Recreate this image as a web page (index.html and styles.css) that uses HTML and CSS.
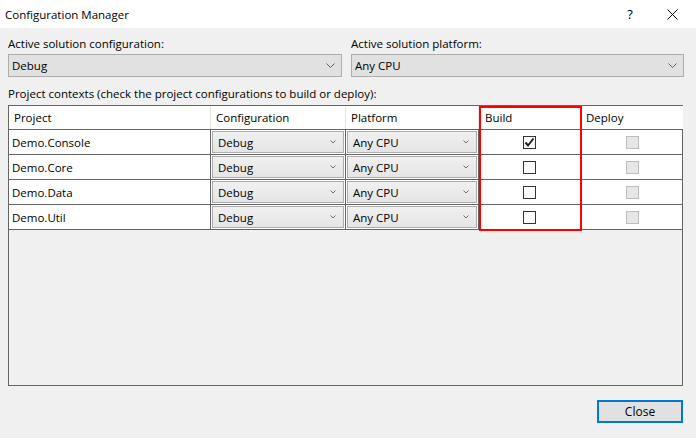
FILE: index.html
```html
<!DOCTYPE html>
<html>
<head>
<meta charset="utf-8">
<link rel="stylesheet" href="styles.css">
</head>
<body>
<div class="window">
  <div class="titlebar">
    <span class="title">Configuration Manager</span>
    <span class="tb-help">?</span>
    <span class="tb-close"><svg width="11" height="11" viewBox="0 0 11 11"><path d="M0.5 0.5 L10.5 10.5 M10.5 0.5 L0.5 10.5" stroke="#000" stroke-width="1" fill="none"/></svg></span>
  </div>
  <div class="content">
    <div class="selectors">
      <div class="field">
        <div class="label">Active solution configuration:</div>
        <div class="combo"><span>Debug</span><svg class="chev" width="9" height="5" viewBox="0 0 9 5"><path d="M0.5 0.5 L4.5 4.5 L8.5 0.5" stroke="#606060" fill="none"/></svg></div>
      </div>
      <div class="field">
        <div class="label">Active solution platform:</div>
        <div class="combo"><span>Any CPU</span><svg class="chev" width="9" height="5" viewBox="0 0 9 5"><path d="M0.5 0.5 L4.5 4.5 L8.5 0.5" stroke="#606060" fill="none"/></svg></div>
      </div>
    </div>
    <div class="label ctx">Project contexts (check the project configurations to build or deploy):</div>
    <div class="grid">
      <div class="row head">
        <div class="hc">Project</div>
        <div class="hc">Configuration</div>
        <div class="hc">Platform</div>
        <div class="hc">Build</div>
        <div class="hc last">Deploy</div>
      </div>
      <div class="row">
        <div class="c name">Demo.Console</div>
        <div class="c cb"><div class="gcombo"><span>Debug</span><svg class="gchev" width="6" height="4" viewBox="0 0 6 4"><path d="M0.5 0.5 L3 3 L5.5 0.5" stroke="#707070" fill="none"/></svg></div></div>
        <div class="c cb"><div class="gcombo"><span>Any CPU</span><svg class="gchev" width="6" height="4" viewBox="0 0 6 4"><path d="M0.5 0.5 L3 3 L5.5 0.5" stroke="#707070" fill="none"/></svg></div></div>
        <div class="c chk"><span class="box"><svg width="11" height="11" viewBox="0 0 11 11"><path d="M1.5 5.5 L4 8.5 L9.5 1.5" stroke="#222" stroke-width="2" fill="none"/></svg></span></div>
        <div class="c chk last"><span class="box dis"></span></div>
      </div>
      <div class="row">
        <div class="c name">Demo.Core</div>
        <div class="c cb"><div class="gcombo"><span>Debug</span><svg class="gchev" width="6" height="4" viewBox="0 0 6 4"><path d="M0.5 0.5 L3 3 L5.5 0.5" stroke="#707070" fill="none"/></svg></div></div>
        <div class="c cb"><div class="gcombo"><span>Any CPU</span><svg class="gchev" width="6" height="4" viewBox="0 0 6 4"><path d="M0.5 0.5 L3 3 L5.5 0.5" stroke="#707070" fill="none"/></svg></div></div>
        <div class="c chk"><span class="box"></span></div>
        <div class="c chk last"><span class="box dis"></span></div>
      </div>
      <div class="row">
        <div class="c name">Demo.Data</div>
        <div class="c cb"><div class="gcombo"><span>Debug</span><svg class="gchev" width="6" height="4" viewBox="0 0 6 4"><path d="M0.5 0.5 L3 3 L5.5 0.5" stroke="#707070" fill="none"/></svg></div></div>
        <div class="c cb"><div class="gcombo"><span>Any CPU</span><svg class="gchev" width="6" height="4" viewBox="0 0 6 4"><path d="M0.5 0.5 L3 3 L5.5 0.5" stroke="#707070" fill="none"/></svg></div></div>
        <div class="c chk"><span class="box"></span></div>
        <div class="c chk last"><span class="box dis"></span></div>
      </div>
      <div class="row">
        <div class="c name">Demo.Util</div>
        <div class="c cb"><div class="gcombo"><span>Debug</span><svg class="gchev" width="6" height="4" viewBox="0 0 6 4"><path d="M0.5 0.5 L3 3 L5.5 0.5" stroke="#707070" fill="none"/></svg></div></div>
        <div class="c cb"><div class="gcombo"><span>Any CPU</span><svg class="gchev" width="6" height="4" viewBox="0 0 6 4"><path d="M0.5 0.5 L3 3 L5.5 0.5" stroke="#707070" fill="none"/></svg></div></div>
        <div class="c chk"><span class="box"></span></div>
        <div class="c chk last"><span class="box dis"></span></div>
      </div>
      <div class="highlight"></div>
    </div>
    <div class="footer">
      <div class="btn">Close</div>
    </div>
  </div>
</div>
</body>
</html>
```

FILE: styles.css
```css
* { box-sizing: border-box; }
html, body { margin: 0; padding: 0; }
body {
  width: 696px;
  height: 438px;
  background: #f0f0f0;
  font-family: "Open Sans", "Noto Sans", sans-serif;
  font-size: 11.5px;
  color: #000;
  overflow: hidden;
}
.titlebar {
  height: 28px;
  background: #ffffff;
  display: flex;
  align-items: center;
}
.title {
  padding-left: 5px;
  font-size: 11.5px;
  flex: 1;
}
.tb-help {
  width: 16px;
  text-align: center;
  font-size: 13px;
  margin-right: 29px;
}
.tb-close {
  display: flex;
  margin-right: 18px;
}
.content {
  padding: 8px 13px 0 8px;
}
.selectors {
  display: grid;
  grid-template-columns: 334px 333px;
  column-gap: 9px;
}
.label {
  height: 16px;
  line-height: 16px;
  white-space: nowrap;
}
.combo {
  margin-top: 2px;
  height: 23px;
  background: #e1e1e1;
  border: 1px solid #adadad;
  display: flex;
  align-items: center;
  justify-content: space-between;
  padding: 0 6px 0 3px;
}
.chev { display: block; }
.ctx { margin-top: 9px; }
.grid {
  position: relative;
  margin-top: 3px;
  height: 281px;
  border: 1px solid #646464;
  background: #f0f0f0;
}
.row {
  display: grid;
  grid-template-columns: 202px 135px 133px 102px 102px;
  height: 25px;
  background: #fff;
  border-bottom: 1px solid #646464;
}
.row.head { height: 24px; }
.hc {
  padding-left: 5px;
  line-height: 23px;
  border-right: 1px solid #e5e5e5;
  background: #fff;
}
.hc:nth-child(4) { padding-left: 6px; }
.hc.last { border-right: none; }
.c {
  border-right: 1px solid #646464;
  display: flex;
  align-items: center;
}
.c.last { border-right: none; }
.name { padding-left: 3px; }
.cb { padding: 1px; }
.gcombo {
  width: 100%;
  height: 22px;
  border: 1px solid #acacac;
  background: linear-gradient(#f0f0f0, #e5e5e5);
  display: flex;
  align-items: center;
  justify-content: space-between;
  padding: 0 7px 0 5px;
}
.gchev { display: block; }
.chk { justify-content: center; }
.box {
  width: 13px;
  height: 13px;
  border: 1px solid #333;
  background: #fff;
  display: flex;
  align-items: center;
  justify-content: center;
}
.box.dis {
  border-color: #bcbcbc;
  background: #e6e6e6;
}
.highlight {
  position: absolute;
  left: 470px;
  top: 0;
  width: 103px;
  height: 125px;
  border: 2px solid #ff0000;
  pointer-events: none;
}
.footer {
  display: flex;
  justify-content: flex-end;
  margin-top: 14px;
}
.btn {
  width: 86px;
  height: 23px;
  border: 2px solid #0078d7;
  background: #e1e1e1;
  text-align: center;
  line-height: 19px;
  font-size: 12px;
}
```
